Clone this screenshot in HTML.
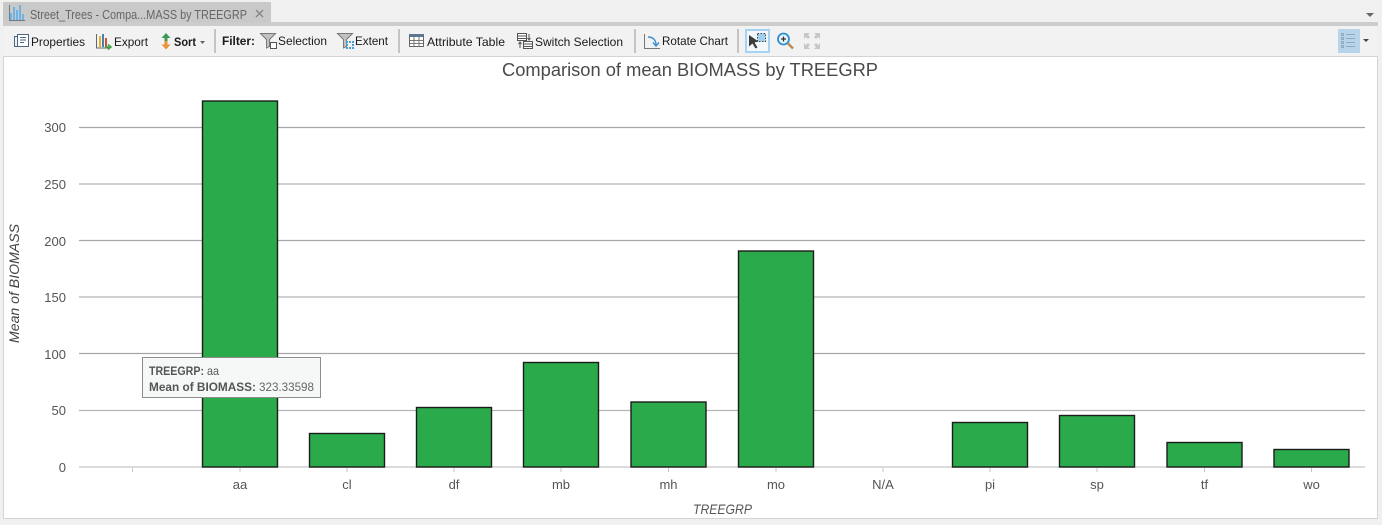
<!DOCTYPE html>
<html><head><meta charset="utf-8"><style>
html,body{margin:0;padding:0;background:#f0f0f0;width:1382px;height:525px;overflow:hidden}
svg{display:block}
text{font-family:"Liberation Sans",sans-serif}
.tb{font-size:12px;fill:#1a1a1a}
.yl{font-size:13px;fill:#555;text-anchor:end}
.xl{font-size:13px;fill:#555;text-anchor:middle}
.bar{fill:#2aaa4a;stroke:#1c1c1c;stroke-width:1.4}
.g{stroke:#a6a6a6;stroke-width:1.2}
.t{stroke:#c4c4c4;stroke-width:1}
</style></head><body>
<svg width="1382" height="525" viewBox="0 0 1382 525" xmlns="http://www.w3.org/2000/svg">
<rect width="1382" height="525" fill="#f0f0f0"/>
<!-- tab -->
<rect x="3" y="2" width="268" height="21" fill="#c9c9c9"/>
<rect x="3" y="22" width="1375" height="4" fill="#cccccc"/>
<g fill="#6cb4e6"><rect x="10" y="13" width="2" height="7"/><rect x="13" y="7" width="2" height="13"/><rect x="16" y="10" width="2" height="10"/><rect x="19" y="5" width="2" height="15"/><rect x="22" y="14" width="2" height="6"/></g>
<path d="M9.500 5V20.500H25" fill="none" stroke="#7a7a7a" stroke-width="1"/>
<text x="30" y="19" font-size="12.500" fill="#666" textLength="217" lengthAdjust="spacingAndGlyphs">Street_Trees - Compa...MASS by TREEGRP</text>
<path d="M256 10l7 7M263 10l-7 7" stroke="#8a8a8a" stroke-width="1.500" fill="none"/>
<path d="M1366 13h8l-4 4z" fill="#666"/>
<!-- toolbar -->
<rect x="3" y="26" width="1375" height="30" fill="#f2f2f2"/>
<rect x="3" y="56" width="1375" height="1" fill="#d4d4d4"/>
<!-- properties -->
<g fill="none" stroke="#4a6680" stroke-width="1"><rect x="17.500" y="34.500" width="11" height="12" fill="#fff"/><rect x="14.500" y="36.500" width="3" height="10" fill="#eef3f7"/><path d="M20 37.500h6M20 40h6M20 42.500h4"/></g>
<text class="tb" x="31" y="46" textLength="54" lengthAdjust="spacingAndGlyphs">Properties</text>
<!-- export -->
<path d="M96.500 34v14h12" fill="none" stroke="#666"/>
<rect x="99" y="36" width="2" height="11" fill="#e2b32e"/><rect x="102" y="34" width="2" height="13" fill="#4a7fb5"/><rect x="105" y="38" width="2" height="9" fill="#c9552e"/>
<path d="M105 47h5M108 44.500l3 2.500-3 2.500" stroke="#3fa548" stroke-width="1.500" fill="none"/>
<text class="tb" x="114" y="46" textLength="34" lengthAdjust="spacingAndGlyphs">Export</text>
<!-- sort -->
<path d="M166 33l-4.500 5h3v3h3v-3h3z" fill="#3c9a55"/>
<path d="M166 49.500l-4.500-5h3v-3.500h3v3.500h3z" fill="#e8923a"/>
<text class="tb" x="174" y="46" font-weight="bold" textLength="22" lengthAdjust="spacingAndGlyphs">Sort</text>
<path d="M200 41h5l-2.500 3z" fill="#666"/>
<rect x="214" y="29" width="2" height="24" fill="#c4c4c4"/>
<text class="tb" x="222" y="45" font-weight="bold" textLength="33" lengthAdjust="spacingAndGlyphs">Filter:</text>
<!-- selection filter -->
<path d="M260.500 33.500h15l-6 6v7l-3 1.500v-8.500z" fill="#c2c2c2" stroke="#777"/>
<rect x="270.500" y="42.500" width="6" height="6" fill="#fff" stroke="#555"/>
<text class="tb" x="278" y="45" textLength="49" lengthAdjust="spacingAndGlyphs">Selection</text>
<!-- extent filter -->
<path d="M337.500 33.500h15l-6 6v7l-3 1.500v-8.500z" fill="#c2c2c2" stroke="#777"/>
<g fill="#4a9ed8"><rect x="346" y="41" width="2" height="2"/><rect x="349" y="41" width="2" height="2"/><rect x="352" y="41" width="2" height="2"/><rect x="346" y="44" width="2" height="2"/><rect x="352" y="44" width="2" height="2"/><rect x="346" y="47" width="2" height="2"/><rect x="349" y="47" width="2" height="2"/><rect x="352" y="47" width="2" height="2"/></g>
<text class="tb" x="355" y="45" textLength="33" lengthAdjust="spacingAndGlyphs">Extent</text>
<rect x="398" y="29" width="2" height="24" fill="#c4c4c4"/>
<!-- attribute table -->
<rect x="409.500" y="34.500" width="14" height="12" fill="#fff" stroke="#666"/>
<rect x="409" y="34" width="15" height="3" fill="#5a7690"/>
<path d="M414 37v9M419 37v9M410 40.500h13M410 43.500h13" stroke="#777" fill="none"/>
<text class="tb" x="427" y="46" textLength="78" lengthAdjust="spacingAndGlyphs">Attribute Table</text>
<!-- switch selection -->
<g fill="none" stroke="#555"><rect x="517.500" y="33.500" width="9" height="7" fill="#fff"/><path d="M518 36h8M518 38.500h8"/><rect x="523.500" y="41.500" width="9" height="7" fill="#fff"/><path d="M524 44h8M524 46.500h8"/><path d="M529 34v6M527.500 38l1.500 2 1.500-2M520 48v-6M518.500 44l1.500-2 1.500 2"/></g>
<text class="tb" x="535" y="46" textLength="88" lengthAdjust="spacingAndGlyphs">Switch Selection</text>
<rect x="634" y="29" width="2" height="24" fill="#c4c4c4"/>
<!-- rotate chart -->
<path d="M644.500 34v14.500H660" fill="none" stroke="#777"/>
<path d="M648 37c5 0 8 3 8 8M653 42.500l3 3.500 3-3.500" fill="none" stroke="#3b8fd0" stroke-width="1.400"/>
<text class="tb" x="662" y="45" textLength="66" lengthAdjust="spacingAndGlyphs">Rotate Chart</text>
<rect x="737" y="29" width="2" height="24" fill="#c4c4c4"/>
<!-- select tool -->
<rect x="746" y="30" width="23" height="22" fill="#f4f8fb" stroke="#a5d3f3" stroke-width="2"/>
<rect x="757.500" y="33.500" width="8" height="8" fill="#9fd0ef" stroke="#444" stroke-dasharray="1.500 1.500"/>
<path d="M749 35l9.500 6.500-4 1 3 5-2 1-3-5-3.500 3z" fill="#3c3c3c"/>
<!-- zoom tool -->
<circle cx="783.500" cy="39" r="5.500" fill="#eaf5fc" stroke="#2e8fd0" stroke-width="1.800"/>
<path d="M781 39h5M783.500 36.500v5" stroke="#333" stroke-width="1.300"/>
<path d="M788 43.500l5 5" stroke="#bb8a4c" stroke-width="2.400"/>
<!-- full extent disabled -->
<g fill="#c6c6c6"><path d="M804 33h6l-2 2 2 2-2 2-2-2-2 2z"/><path d="M820 33h-6l2 2-2 2 2 2 2-2 2 2z"/><path d="M804 49h6l-2-2 2-2-2-2-2 2-2-2z"/><path d="M820 49h-6l2-2-2-2 2-2 2 2 2-2z"/></g>
<!-- right toggle -->
<rect x="1338" y="29" width="22" height="24" fill="#b7d4ea"/>
<g fill="none" stroke="#8fa8bc"><rect x="1341.500" y="33.500" width="2" height="2"/><rect x="1341.500" y="37.500" width="2" height="2"/><rect x="1341.500" y="41.500" width="2" height="2"/><rect x="1341.500" y="45.500" width="2" height="2"/><path d="M1346 34.500h9M1346 38.500h9M1346 42.500h9M1346 46.500h9"/></g>
<path d="M1363 39h6l-3 3z" fill="#444"/>
<!-- chart panel -->
<rect x="3.500" y="56.500" width="1374" height="462" fill="#fff" stroke="#d4d4d4"/>
<text x="690" y="76" font-size="18" fill="#4a4a4a" text-anchor="middle" textLength="376" lengthAdjust="spacingAndGlyphs">Comparison of mean BIOMASS by TREEGRP</text>
<!-- gridlines -->
<path class="g" d="M79 127.500H1365M79 240.500H1365M79 353.500H1365"/>
<path d="M79 184H1365M79 297H1365M79 410.500H1365" stroke="#b4b4b4" stroke-width="1.300"/>
<path d="M79 467H1365" stroke="#cfcfcf" stroke-width="1.600"/>
<path class="t" d="M132.500 468v4M240 468v4M347 468v4M454 468v4M561 468v4M668.500 468v4M776 468v4M883 468v4M990 468v4M1097 468v4M1204.500 468v4M1311.500 468v4"/>
<!-- y labels -->
<text class="yl" x="66" y="132">300</text>
<text class="yl" x="66" y="189">250</text>
<text class="yl" x="66" y="246">200</text>
<text class="yl" x="66" y="302">150</text>
<text class="yl" x="66" y="359">100</text>
<text class="yl" x="66" y="415">50</text>
<text class="yl" x="66" y="472">0</text>
<text x="19" y="343" font-size="14" font-style="italic" fill="#444" transform="rotate(-90 19 343)" textLength="119" lengthAdjust="spacingAndGlyphs">Mean of BIOMASS</text>
<!-- bars -->
<rect class="bar" x="202.500" y="101" width="75" height="366"/>
<rect class="bar" x="309.500" y="433.500" width="75" height="33.500"/>
<rect class="bar" x="416.500" y="407.500" width="75" height="59.500"/>
<rect class="bar" x="523.500" y="362.500" width="75" height="104.500"/>
<rect class="bar" x="631" y="402" width="75" height="65"/>
<rect class="bar" x="738.500" y="251" width="75" height="216"/>
<rect class="bar" x="952.500" y="422.500" width="75" height="44.500"/>
<rect class="bar" x="1059.500" y="415.500" width="75" height="51.500"/>
<rect class="bar" x="1167" y="442.500" width="75" height="24.500"/>
<rect class="bar" x="1274" y="449.500" width="75" height="17.500"/>
<!-- x labels -->
<text class="xl" x="240" y="489">aa</text>
<text class="xl" x="347" y="489">cl</text>
<text class="xl" x="454" y="489">df</text>
<text class="xl" x="561" y="489">mb</text>
<text class="xl" x="668.500" y="489">mh</text>
<text class="xl" x="776" y="489">mo</text>
<text class="xl" x="883" y="489">N/A</text>
<text class="xl" x="990" y="489">pi</text>
<text class="xl" x="1097" y="489">sp</text>
<text class="xl" x="1204.500" y="489">tf</text>
<text class="xl" x="1311.500" y="489">wo</text>
<text x="693" y="514" font-size="14" font-style="italic" fill="#555" textLength="59" lengthAdjust="spacingAndGlyphs">TREEGRP</text>
<!-- tooltip -->
<rect x="142.500" y="357.500" width="178" height="40" fill="#f6f8f8" stroke="#8e8e8e"/>
<text x="149" y="375" font-size="12" font-weight="bold" fill="#555" textLength="55" lengthAdjust="spacingAndGlyphs">TREEGRP:</text>
<text x="207" y="375" font-size="12" fill="#555" textLength="12" lengthAdjust="spacingAndGlyphs">aa</text>
<text x="149" y="391" font-size="12" font-weight="bold" fill="#555" textLength="107" lengthAdjust="spacingAndGlyphs">Mean of BIOMASS:</text>
<text x="259" y="391" font-size="12" fill="#666" textLength="55" lengthAdjust="spacingAndGlyphs">323.33598</text>
</svg>
</body></html>
